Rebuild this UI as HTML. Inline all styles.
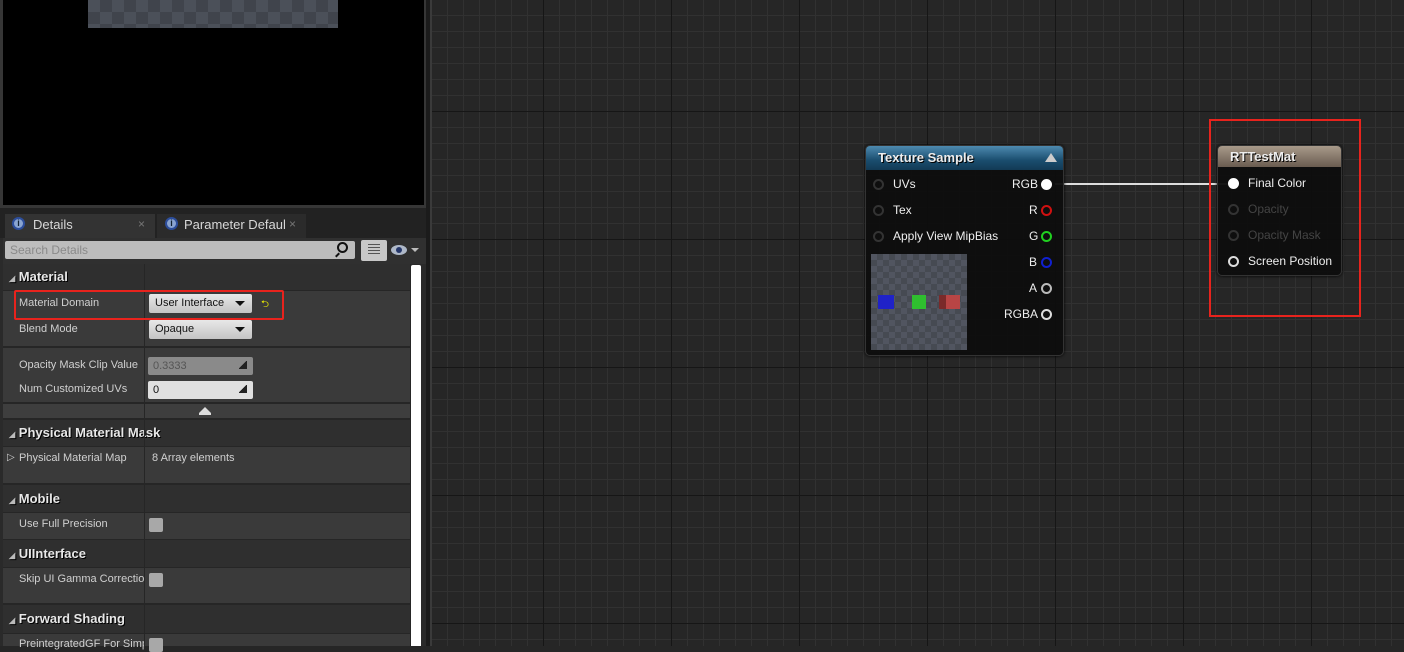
<!DOCTYPE html>
<html><head><meta charset="utf-8"><style>
*{margin:0;padding:0;box-sizing:border-box}
body{width:1404px;height:646px;overflow:hidden;background:#262626;font-family:"Liberation Sans",sans-serif;position:relative}
.a{position:absolute}
#graph{left:432px;top:0;width:972px;height:646px;background-color:#262626;
background-image:
linear-gradient(to right,#161616 0,#161616 1px,transparent 1px),
linear-gradient(to bottom,#161616 0,#161616 1px,transparent 1px),
linear-gradient(to right,#313131 0,#313131 1px,transparent 1px),
linear-gradient(to bottom,#313131 0,#313131 1px,transparent 1px);
background-size:128px 128px,128px 128px,16px 16px,16px 16px;
background-position:111px 0,0 111px,15px 0,0 15px}
.lt{font-size:11px;color:#d0d0d0}
.hdr{left:3px;width:407px;background:#2f2f2f;color:#e8e8e8;font-weight:bold;font-size:13px;padding-left:6px;text-shadow:1px 1px 0 #000}
.row{left:3px;width:407px;background:#3a3a3a}
.vd{left:144px;width:1px;background:#262626}
.dd{background:linear-gradient(#e8e8e8,#c4c4c4);border-radius:2px;font-size:11px;color:#111;padding:3px 0 0 6px;height:19px}
.dd:after{content:"";position:absolute;right:7px;top:7px;border-left:5px solid transparent;border-right:5px solid transparent;border-top:5px solid #111}
.num{background:#e0e0e0;border-radius:2px;font-size:11px;color:#111;padding:3px 0 0 5px;height:18px}
.cb{width:14px;height:14px;background:#a8a8a8;border-radius:2px}
.node{background:rgba(14,14,14,.96);border-radius:5px;box-shadow:0 0 3px #000}
.pin{font-size:12px;color:#eee}
.c{width:11px;height:11px;border-radius:50%;border:2px solid #fff}
</style></head><body>
<div id="graph" class="a"></div>
<div class="a" style="left:0;top:0;width:426px;height:646px;background:#2a2a2a"></div>
<div class="a" style="left:426px;top:0;width:6px;height:646px;background:#1b1b1b"></div>
<div class="a" style="left:430px;top:0;width:2px;height:646px;background:#3a3a3a"></div>
<div class="a" style="left:0;top:0;width:426px;height:208px;background:#363636"></div>
<div class="a" style="left:3px;top:0;width:421px;height:205px;background:#000"></div>
<div class="a" style="left:88px;top:0;width:250px;height:28px;background-color:#474c55;background-image:repeating-conic-gradient(#40444c 0 25%,#4b5059 0 50%);background-size:24px 24px"></div>
<div class="a" style="left:0;top:208px;width:426px;height:30px;background:#222"></div>
<div class="a" style="left:5px;top:214px;width:150px;height:24px;background:#333"></div>
<div class="a" style="left:157px;top:214px;width:149px;height:24px;background:#2b2b2b"></div>
<div class="a" style="left:12px;top:217px;width:13px;height:13px;border-radius:50%;background:#8aa4d0;border:2px solid #2c4d9b;font-size:9px;color:#123;text-align:center;line-height:9px;font-weight:bold">i</div>
<div class="a" style="left:165px;top:217px;width:13px;height:13px;border-radius:50%;background:#8aa4d0;border:2px solid #2c4d9b;font-size:9px;color:#123;text-align:center;line-height:9px;font-weight:bold">i</div>
<div class="a" style="left:33px;top:217px;font-size:13px;color:#d8d8d8">Details</div>
<div class="a" style="left:138px;top:217px;font-size:12px;color:#777">×</div>
<div class="a" style="left:184px;top:217px;font-size:13px;color:#d8d8d8;width:101px;overflow:hidden;white-space:nowrap">Parameter Defaults</div>
<div class="a" style="left:289px;top:217px;font-size:12px;color:#777">×</div>
<div class="a" style="left:3px;top:238px;width:423px;height:26px;background:#303030"></div>
<div class="a" style="left:5px;top:241px;width:350px;height:18px;background:#bdbdbd;border-radius:2px;font-size:12px;color:#8a8a8a;padding:2px 0 0 5px">Search Details</div>
<div class="a" style="left:337px;top:242px;width:11px;height:11px;border:2px solid #111;border-radius:50%"></div>
<div class="a" style="left:335px;top:254px;width:5px;height:2px;background:#111;transform:rotate(-45deg)"></div>
<div class="a" style="left:361px;top:240px;width:26px;height:21px;background:#c8c8c8;border-radius:2px"></div>
<div class="a" style="left:368px;top:244px;width:12px;height:12px;background:repeating-linear-gradient(#555 0 1px,transparent 1px 3px)"></div>
<div class="a" style="left:391px;top:245px;width:16px;height:10px;border-radius:50%;background:#aeb8c8"></div>
<div class="a" style="left:396px;top:247px;width:6px;height:6px;border-radius:50%;background:#25376a"></div>
<div class="a" style="left:411px;top:248px;border-left:4px solid transparent;border-right:4px solid transparent;border-top:4px solid #bbb"></div>
<div class="a" style="left:3px;top:264px;width:408px;height:382px;background:#262626"></div>
<div class="a hdr" style="top:264px;height:26px;line-height:25px"><span style="font-size:8px;color:#bbb">◢</span> Material</div>
<div class="a row" style="top:291px;height:55px"></div>
<div class="a row" style="top:348px;height:54px"></div>
<div class="a" style="left:3px;top:404px;width:407px;height:14px;background:#3e3e3e"></div>
<div class="a" style="left:199px;top:407px;border-left:6px solid transparent;border-right:6px solid transparent;border-bottom:6px solid #ddd"></div>
<div class="a" style="left:199px;top:413px;width:12px;height:2px;background:#ddd"></div>
<div class="a hdr" style="top:420px;height:26px;line-height:25px"><span style="font-size:8px;color:#bbb">◢</span> Physical Material Mask</div>
<div class="a row" style="top:447px;height:36px"></div>
<div class="a hdr" style="top:485px;height:27px;line-height:27px"><span style="font-size:8px;color:#bbb">◢</span> Mobile</div>
<div class="a row" style="top:513px;height:26px"></div>
<div class="a hdr" style="top:540px;height:27px;line-height:27px"><span style="font-size:8px;color:#bbb">◢</span> UIInterface</div>
<div class="a row" style="top:568px;height:35px"></div>
<div class="a hdr" style="top:605px;height:28px;line-height:28px"><span style="font-size:8px;color:#bbb">◢</span> Forward Shading</div>
<div class="a row" style="top:634px;height:12px"></div>
<div class="a vd" style="top:264px;height:382px"></div>
<div class="a" style="left:411px;top:265px;width:10px;height:381px;background:#fff;border-radius:2px 2px 0 0"></div>
<div class="a lt" style="left:19px;top:297px">Material Domain</div>
<div class="a dd" style="left:149px;top:294px;width:103px">User Interface</div>
<div class="a" style="left:261px;top:297px;font-size:10px;color:#ee0">⮌</div>
<div class="a" style="left:14px;top:290px;width:270px;height:30px;border:2px solid #e8231d;border-radius:2px"></div>
<div class="a lt" style="left:19px;top:323px">Blend Mode</div>
<div class="a dd" style="left:149px;top:320px;width:103px">Opaque</div>
<div class="a lt" style="left:19px;top:359px">Opacity Mask Clip Value</div>
<div class="a num" style="left:148px;top:357px;width:105px;background:#8a8a8a;color:#555">0.3333</div>
<div class="a lt" style="left:19px;top:383px">Num Customized UVs</div>
<div class="a num" style="left:148px;top:381px;width:105px">0</div>
<div class="a" style="left:239px;top:361px;width:8px;height:8px;background:linear-gradient(135deg,transparent 45%,#222 45%)"></div>
<div class="a" style="left:239px;top:385px;width:8px;height:8px;background:linear-gradient(135deg,transparent 45%,#222 45%)"></div>
<div class="a lt" style="left:7px;top:452px;font-size:10px">▷</div>
<div class="a lt" style="left:19px;top:452px">Physical Material Map</div>
<div class="a lt" style="left:152px;top:452px">8 Array elements</div>
<div class="a lt" style="left:19px;top:518px">Use Full Precision</div>
<div class="a cb" style="left:149px;top:518px"></div>
<div class="a lt" style="left:19px;top:573px;width:125px;overflow:hidden;white-space:nowrap">Skip UI Gamma Correction</div>
<div class="a cb" style="left:149px;top:573px"></div>
<div class="a lt" style="left:19px;top:638px;width:125px;overflow:hidden;white-space:nowrap">PreintegratedGF For Simple IBL</div>
<div class="a cb" style="left:149px;top:638px"></div>
<div class="a" style="left:1055px;top:183px;width:175px;height:2px;background:#ddd"></div>
<div class="a node" style="left:865px;top:145px;width:199px;height:211px;border:1px solid #333"></div>
<div class="a" style="left:866px;top:146px;width:197px;height:24px;border-radius:4px 4px 0 0;background:linear-gradient(#4d8ab0,#1a4d6e 60%,#123a55)"></div>
<div class="a" style="left:878px;top:150px;font-size:13px;font-weight:bold;color:#eee;text-shadow:1px 1px 0 #000">Texture Sample</div>
<div class="a" style="left:1045px;top:153px;border-left:6px solid transparent;border-right:6px solid transparent;border-bottom:9px solid #ccc"></div>
<div class="a c" style="left:873px;top:179px;border-color:#333"></div><div class="a pin" style="left:893px;top:177px">UVs</div>
<div class="a c" style="left:873px;top:205px;border-color:#333"></div><div class="a pin" style="left:893px;top:203px">Tex</div>
<div class="a c" style="left:873px;top:231px;border-color:#333"></div><div class="a pin" style="left:893px;top:229px">Apply View MipBias</div>
<div class="a pin" style="left:1012px;top:177px">RGB</div><div class="a c" style="left:1041px;top:179px;background:#fff"></div>
<div class="a pin" style="left:1029px;top:203px">R</div><div class="a c" style="left:1041px;top:205px;border-color:#d01010"></div>
<div class="a pin" style="left:1029px;top:229px">G</div><div class="a c" style="left:1041px;top:231px;border-color:#20d020"></div>
<div class="a pin" style="left:1029px;top:255px">B</div><div class="a c" style="left:1041px;top:257px;border-color:#1020d0"></div>
<div class="a pin" style="left:1029px;top:281px">A</div><div class="a c" style="left:1041px;top:283px;border-color:#bbb"></div>
<div class="a pin" style="left:1004px;top:307px">RGBA</div><div class="a c" style="left:1041px;top:309px;border-color:#ddd"></div>
<div class="a" style="left:871px;top:254px;width:96px;height:96px;background-color:#4a4e57;background-image:repeating-conic-gradient(#464a52 0 25%,#515560 0 50%);background-size:12px 12px"></div>
<div class="a" style="left:878px;top:295px;width:16px;height:14px;background:#1f22c8"></div>
<div class="a" style="left:912px;top:295px;width:14px;height:14px;background:#2fbf2f"></div>
<div class="a" style="left:946px;top:295px;width:14px;height:14px;background:#b84545"></div>
<div class="a" style="left:939px;top:295px;width:7px;height:14px;background:#7a2a2a"></div>
<div class="a node" style="left:1217px;top:145px;width:125px;height:131px;border:1px solid #333"></div>
<div class="a" style="left:1218px;top:146px;width:123px;height:21px;border-radius:4px 4px 0 0;background:linear-gradient(#a89a8a,#6a5c50)"></div>
<div class="a" style="left:1230px;top:149px;font-size:13px;font-weight:bold;color:#eee;text-shadow:1px 1px 0 #000">RTTestMat</div>
<div class="a c" style="left:1228px;top:178px;background:#fff"></div><div class="a pin" style="left:1248px;top:176px">Final Color</div>
<div class="a c" style="left:1228px;top:204px;border-color:#333"></div><div class="a pin" style="left:1248px;top:202px;color:#444">Opacity</div>
<div class="a c" style="left:1228px;top:230px;border-color:#333"></div><div class="a pin" style="left:1248px;top:228px;color:#444">Opacity Mask</div>
<div class="a c" style="left:1228px;top:256px;border-color:#ddd"></div><div class="a pin" style="left:1248px;top:254px">Screen Position</div>
<div class="a" style="left:1209px;top:119px;width:152px;height:198px;border:2px solid #e8231d"></div>
</body></html>
